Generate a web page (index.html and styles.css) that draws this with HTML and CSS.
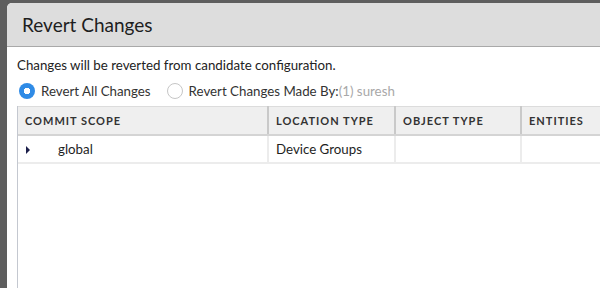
FILE: index.html
```html
<!DOCTYPE html>
<html lang="en">
    <head>
        <meta charset="UTF-8" />
        <title>Revert Changes</title>
        <link rel="stylesheet" href="styles.css">
    </head>
    <body>
        <div class="dialog">
            <div class="dialog-title">Revert Changes</div>
            <div class="dialog-body">
                <p class="note">Changes will be reverted from candidate configuration.</p>
                <div class="radio-row">
                    <label class="radio checked"><span class="dot"></span>Revert All Changes</label>
                    <label class="radio"><span class="dot"></span>Revert Changes Made By:<span class="muted">(1) suresh</span></label>
                </div>
                <div class="grid-wrap">
                    <table class="grid">
                        <thead>
                            <tr>
                                <th class="c-scope">COMMIT SCOPE</th>
                                <th class="c-loc">LOCATION TYPE</th>
                                <th class="c-obj">OBJECT TYPE</th>
                                <th class="c-ent">ENTITIES</th>
                            </tr>
                        </thead>
                        <tbody>
                            <tr>
                                <td><span class="caret"></span>global</td>
                                <td>Device Groups</td>
                                <td></td>
                                <td></td>
                            </tr>
                        </tbody>
                    </table>
                </div>
            </div>
        </div>
    </body>
</html>
```

FILE: styles.css
```css
body {
    margin: 0;
    padding: 3px 0 0 7px;
    background-color: #5e5e5e;
    font-family: Lato, "Open Sans", sans-serif;
    color: #222;
    overflow: hidden;
    height: 288px;
    box-sizing: border-box;
}
.dialog {
    width: 593px;
    height: 285px;
    background-color: white;
    border-radius: 5px 0 0 0;
    overflow: hidden;
    display: flex;
    flex-direction: column;
}
.dialog-title {
    height: 43px;
    line-height: 44px;
    padding-left: 15px;
    font-size: 19px;
    color: #1e1e1e;
    background-color: #dddddd;
    border-bottom: 1px solid #a9a9a9;
}
.dialog-body {
    flex: 1;
    padding: 7px 0 0 10px;
    display: flex;
    flex-direction: column;
}
.note {
    margin: 0;
    font-size: 13.3px;
    line-height: 22px;
}
.radio-row {
    display: flex;
    gap: 14px;
    margin-top: 3px;
    height: 24px;
    align-items: center;
}
.radio {
    display: flex;
    align-items: center;
    font-size: 13.3px;
    color: #333;
}
.radio .dot {
    width: 14px;
    height: 14px;
    border: 1px solid #c6c6c6;
    border-radius: 50%;
    margin: 0 6px 0 2px;
    background: white;
}
.radio.checked .dot {
    width: 16px;
    height: 16px;
    border: none;
    background: radial-gradient(circle, white 0 3px, #2f8be6 3.5px);
}
.muted {
    color: #a8a8a8;
}
.grid-wrap {
    flex: 1;
    margin-top: 3px;
    border-left: 1px solid #c4c8d0;
    overflow: hidden;
}
.grid {
    border-collapse: collapse;
    table-layout: fixed;
    width: 582px;
}
.grid th {
    height: 27px;
    padding: 0 0 0 7px;
    text-align: left;
    font-size: 11px;
    font-weight: bold;
    letter-spacing: 1px;
    color: #333;
    background-color: #efefef;
    border-top: 1px solid #dcdcdc;
    border-bottom: 2px solid #d4d4d4;
    border-right: 2px solid #c9c9c9;
}
.c-scope { width: 242px; }
.c-loc { width: 118px; }
.c-obj { width: 117px; }
.c-ent { width: 80px; }
.grid td {
    height: 26px;
    padding: 0 0 0 7px;
    font-size: 13.3px;
    color: #1e1e1e;
    border-right: 2px solid #ececec;
    border-bottom: 2px solid #ececec;
}
.caret {
    display: inline-block;
    width: 0;
    height: 0;
    border-top: 4px solid transparent;
    border-bottom: 4px solid transparent;
    border-left: 4px solid #1c1f4a;
    margin: 0 28px 0 1px;
    vertical-align: 0;
}
```
